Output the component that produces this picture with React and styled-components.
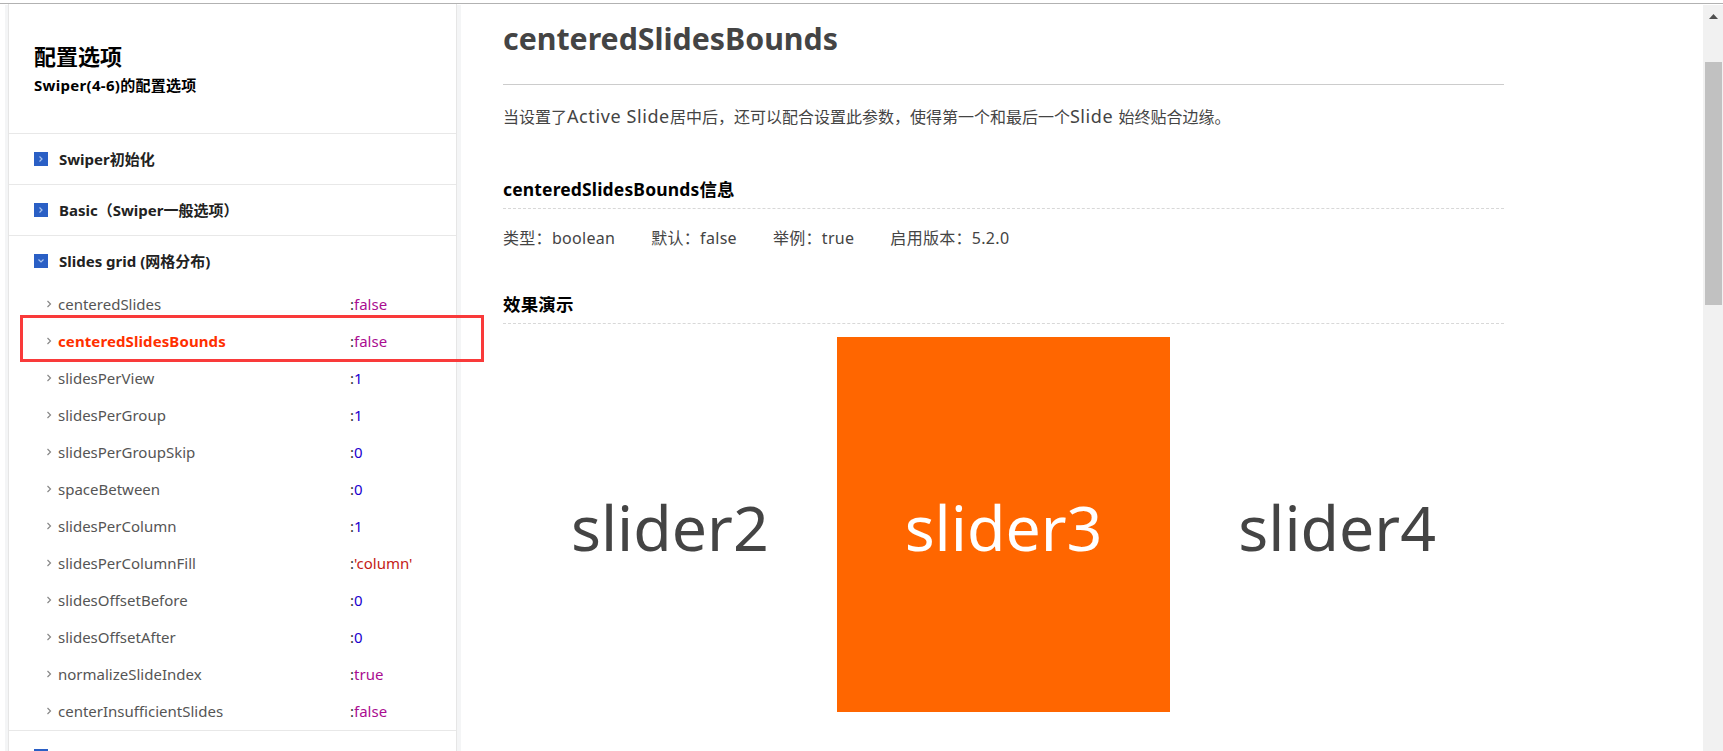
import React from 'react';
import styled, { createGlobalStyle } from 'styled-components';

const GlobalStyle = createGlobalStyle`
  html, body {
    margin: 0;
    height: 100%;
    overflow: hidden;
    background: #fff;
  }
  body {
    font-family: 'Noto Sans', 'Noto Sans CJK SC', sans-serif;
    color: #444;
  }
`;

const Page = styled.div`
  height: 751px;
  display: flex;
  flex-direction: column;
  overflow: hidden;
`;

const TopLine = styled.div`
  flex: none;
  height: 1px;
  margin-top: 3px;
  background: #b2b2b2;
`;

const Body = styled.div`
  flex: 1;
  min-height: 0;
  display: flex;
`;

const SidebarFrame = styled.aside`
  flex: none;
  width: 449px;
  margin: 1px 0 0 5px;
  padding: 0 4px 0 3px;
  background: #f4f5f6;
`;

const Sidebar = styled.div`
  height: 100%;
  border-left: 1px solid #e6e6e6;
  border-right: 1px solid #e6e6e6;
  background: #fff;
  margin-top: -1px;
  padding-top: 1px;
`;

const SidebarHead = styled.header`
  height: 129px;
  box-sizing: border-box;
  padding: 36px 0 0 25px;
  border-bottom: 1px solid #e8e8e8;
  color: #000;
`;

const SidebarTitle = styled.div`
  font-size: 22px;
  font-weight: 700;
  line-height: 30px;
`;

const SidebarSub = styled.div`
  font-size: 15px;
  font-weight: 700;
  line-height: 28px;
  letter-spacing: 0.3px;
`;

const Section = styled.div`
  border-bottom: 1px solid #e8e8e8;
`;

const SectionHead = styled.div`
  height: 50px;
  box-sizing: border-box;
  padding: 0 0 2px 25px;
  display: flex;
  align-items: center;
  gap: 11px;
  font-size: 15px;
  font-weight: 700;
  color: #222;
`;

const SquareIcon = styled.svg`
  flex: none;
  width: 14px;
  height: 14px;
  margin-top: 2px;
`;

const Row = styled.div`
  position: relative;
  height: 37px;
  box-sizing: border-box;
  padding-bottom: 2px;
  display: flex;
  align-items: center;
  font-size: 15px;
  color: #555;
`;

const Caret = styled.svg`
  flex: none;
  width: 6px;
  height: 8px;
  margin: 0 6px 0 37px;
`;

const RowName = styled.span`
  width: 292px;
  flex: none;
  font-weight: ${p => (p.$active ? 700 : 400)};
  letter-spacing: ${p => (p.$active ? '0.1px' : '0')};
  color: ${p => (p.$active ? '#ff2f00' : '#555')};
`;

const VALUE_COLORS = {
  bool: '#aa0d91',
  num: '#1c00cf',
  str: '#c41a16',
};

const RowValue = styled.span`
  color: #333;
  & > b {
    font-weight: 400;
    color: ${p => VALUE_COLORS[p.$kind]};
  }
`;

const Highlight = styled.div`
  position: absolute;
  left: 11px;
  right: -28px;
  top: -8px;
  bottom: -2px;
  border: 3px solid #f93a3a;
  pointer-events: none;
`;

const Main = styled.main`
  flex: none;
  width: 1001px;
  margin-left: 42px;
`;

const PageTitle = styled.h1`
  margin: 0;
  height: 80px;
  line-height: 70px;
  font-size: 30.3px;
  font-weight: 700;
  color: #444;
  border-bottom: 1px solid #ccc;
`;

const Para = styled.p`
  margin: 20px 0 0;
  height: 24px;
  font-size: 16px;
  line-height: 24px;
`;

const Latin = styled.span`
  font-size: 18px;
  line-height: 1;
  letter-spacing: 0.6px;
`;

const SubHead = styled.h2`
  margin: ${p => p.$top}px 0 0;
  padding-bottom: 8px;
  line-height: 22px;
  font-size: 17.5px;
  font-weight: 700;
  letter-spacing: 0.15px;
  color: #000;
  border-bottom: 1px dashed #d8d8d8;
`;

const InfoRow = styled.div`
  margin-top: 17px;
  display: flex;
  gap: 36px;
  font-size: 16px;
  line-height: 24px;
  letter-spacing: 0.3px;
`;

const Slides = styled.div`
  margin-top: 13px;
  height: 375px;
  display: grid;
  grid-template-columns: repeat(3, 1fr);
`;

const Slide = styled.div`
  display: flex;
  align-items: center;
  justify-content: center;
  padding-top: 3px;
  font-size: 62.6px;
  background: ${p => (p.$active ? '#ff6600' : 'transparent')};
  color: ${p => (p.$active ? '#fff' : '#444')};
`;

const Scrollbar = styled.div`
  flex: none;
  width: 20px;
  margin: 1px 0 0 auto;
  background: #f1f1f1;
  position: relative;
  display: flex;
  flex-direction: column;
  align-items: flex-end;
`;

const ArrowUp = styled.svg`
  width: 9px;
  height: 5px;
  margin: 9px 5px 0 0;
`;

const Thumb = styled.div`
  width: 17px;
  height: 243px;
  margin: 43px 1px 0 0;
  background: #c1c1c1;
`;

function SectionIcon({ open }) {
  return (
    <SquareIcon viewBox="0 0 14 14">
      <rect width="14" height="14" fill="#2a5fc5" />
      <polyline
        points={open ? '4.5,5.5 7,8 9.5,5.5' : '5.5,4.5 8,7 5.5,9.5'}
        fill="none"
        stroke="#a8c3ee"
        strokeWidth="1.2"
      />
    </SquareIcon>
  );
}

const options = [
  { name: 'centeredSlides', value: 'false', kind: 'bool' },
  { name: 'centeredSlidesBounds', value: 'false', kind: 'bool', active: true },
  { name: 'slidesPerView', value: '1', kind: 'num' },
  { name: 'slidesPerGroup', value: '1', kind: 'num' },
  { name: 'slidesPerGroupSkip', value: '0', kind: 'num' },
  { name: 'spaceBetween', value: '0', kind: 'num' },
  { name: 'slidesPerColumn', value: '1', kind: 'num' },
  { name: 'slidesPerColumnFill', value: "'column'", kind: 'str' },
  { name: 'slidesOffsetBefore', value: '0', kind: 'num' },
  { name: 'slidesOffsetAfter', value: '0', kind: 'num' },
  { name: 'normalizeSlideIndex', value: 'true', kind: 'bool' },
  { name: 'centerInsufficientSlides', value: 'false', kind: 'bool' },
];

export default function App() {
  return (
    <>
      <GlobalStyle />
      <Page>
        <TopLine />
        <Body>
          <SidebarFrame>
            <Sidebar>
              <SidebarHead>
                <SidebarTitle>配置选项</SidebarTitle>
                <SidebarSub>Swiper(4-6)的配置选项</SidebarSub>
              </SidebarHead>
              <Section>
                <SectionHead><SectionIcon />Swiper初始化</SectionHead>
              </Section>
              <Section>
                <SectionHead><SectionIcon />Basic（Swiper一般选项）</SectionHead>
              </Section>
              <Section>
                <SectionHead><SectionIcon open />Slides grid (网格分布)</SectionHead>
                {options.map(o => (
                  <Row key={o.name}>
                    <Caret viewBox="0 0 6 8">
                      <polyline points="1.5,1 4.5,4 1.5,7" fill="none" stroke="#888" strokeWidth="1.2" />
                    </Caret>
                    <RowName $active={o.active}>{o.name}</RowName>
                    <RowValue $kind={o.kind}>:<b>{o.value}</b></RowValue>
                    {o.active && <Highlight />}
                  </Row>
                ))}
              </Section>
              <SectionHead><SectionIcon /></SectionHead>
            </Sidebar>
          </SidebarFrame>
          <Main>
            <PageTitle>centeredSlidesBounds</PageTitle>
            <Para>当设置了<Latin>Active Slide</Latin>居中后，还可以配合设置此参数，使得第一个和最后一个<Latin>Slide </Latin>始终贴合边缘。</Para>
            <SubHead $top={49}>centeredSlidesBounds信息</SubHead>
            <InfoRow>
              <span>类型：boolean</span>
              <span>默认：false</span>
              <span>举例：true</span>
              <span>启用版本：5.2.0</span>
            </InfoRow>
            <SubHead $top={43}>效果演示</SubHead>
            <Slides>
              <Slide>slider2</Slide>
              <Slide $active>slider3</Slide>
              <Slide>slider4</Slide>
            </Slides>
          </Main>
          <Scrollbar>
            <ArrowUp viewBox="0 0 9 5"><polygon points="4.5,0 9,5 0,5" fill="#505050" /></ArrowUp>
            <Thumb />
          </Scrollbar>
        </Body>
      </Page>
    </>
  );
}
